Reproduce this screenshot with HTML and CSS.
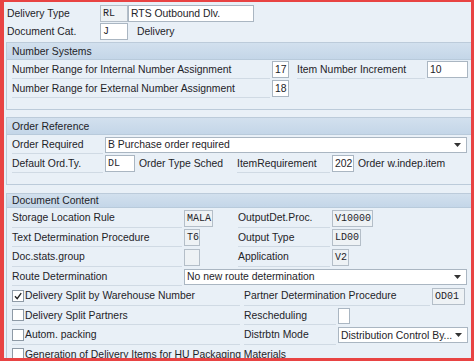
FILE: index.html
```html
<!DOCTYPE html>
<html>
<head>
<meta charset="utf-8">
<link rel="stylesheet" href="styles.css">
</head>
<body>
<div class="frame">
  <div class="top">
    <div class="trow">
      <span class="tl">Delivery Type</span>
      <span class="fld ro mono w28">RL</span>
      <span class="fld w126">RTS Outbound Dlv.</span>
    </div>
    <div class="trow">
      <span class="tl">Document Cat.</span>
      <span class="fld mono w28">J</span>
      <span class="desc ml9">Delivery</span>
    </div>
  </div>

  <section class="grp g1">
    <div class="gh">Number Systems</div>
    <div class="gb">
      <div class="r">
        <span class="lb l258">Number Range for Internal Number Assignment</span>
        <span class="fld w17 ml2">17</span>
        <span class="lb l128 ml8">Item Number Increment</span>
        <span class="fld w41 ml2">10</span>
      </div>
      <div class="r">
        <span class="lb l258">Number Range for External Number Assignment</span>
        <span class="fld w17 ml2">18</span>
      </div>
    </div>
  </section>

  <section class="grp g2">
    <div class="gh">Order Reference</div>
    <div class="gb">
      <div class="r">
        <span class="lb l91">Order Required</span>
        <span class="fld dd w362 ml2"><span class="ddt">B Purchase order required</span><svg class="arr" width="7" height="4" viewBox="0 0 7 4"><path d="M0 0H7L3.5 4Z" fill="#333"/></svg></span>
      </div>
      <div class="r">
        <span class="lb l91">Default Ord.Ty.</span>
        <span class="fld mono w30 ml2">DL</span>
        <span class="desc d98 ml4">Order Type Sched</span>
        <span class="lb l93">ItemRequirement</span>
        <span class="fld w22 ml2">202</span>
        <span class="desc ml4">Order w.indep.item</span>
      </div>
    </div>
  </section>

  <section class="grp g3">
    <div class="gh">Document Content</div>
    <div class="gb">
      <div class="r">
        <span class="lb l170">Storage Location Rule</span>
        <span class="cell ml2"><span class="fld ro mono w29">MALA</span></span>
        <span class="lb l92 ml2">OutputDet.Proc.</span>
        <span class="fld ro mono w41 ml2">V10000</span>
      </div>
      <div class="r">
        <span class="lb l170">Text Determination Procedure</span>
        <span class="cell ml2"><span class="fld ro mono w16">T6</span></span>
        <span class="lb l92 ml2">Output Type</span>
        <span class="fld ro mono w29 ml2">LD00</span>
      </div>
      <div class="r">
        <span class="lb l170">Doc.stats.group</span>
        <span class="cell ml2"><span class="fld ro mono w16"></span></span>
        <span class="lb l92 ml2">Application</span>
        <span class="fld ro mono w17 ml2">V2</span>
      </div>
      <div class="r">
        <span class="lb l170">Route Determination</span>
        <span class="fld dd w283 ml2"><span class="ddt">No new route determination</span><svg class="arr" width="7" height="4" viewBox="0 0 7 4"><path d="M0 0H7L3.5 4Z" fill="#333"/></svg></span>
      </div>
      <div class="r">
        <span class="lb cbl l228"><span class="cb"><svg width="10" height="10" viewBox="0 0 10 10"><path d="M2 5.2L4.2 7.6L8.2 2.2" fill="none" stroke="#222" stroke-width="1.4"/></svg></span>Delivery Split by Warehouse Number</span>
        <span class="lb l186 ml4">Partner Determination Procedure</span>
        <span class="fld ro mono w33 ml2">OD01</span>
      </div>
      <div class="r">
        <span class="lb cbl l228"><span class="cb"></span>Delivery Split Partners</span>
        <span class="lb l92 ml4">Rescheduling</span>
        <span class="fld w12 tall ml2"></span>
      </div>
      <div class="r">
        <span class="lb cbl l228"><span class="cb"></span>Autom. packing</span>
        <span class="lb l92 ml4">Distrbtn Mode</span>
        <span class="fld dd w130 ml2"><span class="ddt">Distribution Control By...</span><svg class="arr" width="7" height="4" viewBox="0 0 7 4"><path d="M0 0H7L3.5 4Z" fill="#333"/></svg></span>
      </div>
      <div class="r">
        <span class="lb cbl l345"><span class="cb"></span>Generation of Delivery Items for HU Packaging Materials</span>
      </div>
    </div>
  </section>
</div>
</body>
</html>
```

FILE: styles.css
```css
html, body {
  margin: 0;
  padding: 0;
}
body {
  font-family: "Liberation Sans", Arial, sans-serif;
  font-size: 10.4px;
  color: #1e2328;
}
.frame {
  width: 474px;
  height: 361px;
  box-sizing: border-box;
  border-style: solid;
  border-color: #e84343;
  border-width: 2px 3px 3px 4px;
  background: #e9f0f7;
  overflow: hidden;
}
.top {
  padding: 2px 0 0 3px;
}
.trow {
  display: flex;
  align-items: center;
  height: 18px;
}
.tl {
  width: 93px;
  flex: none;
}
.desc {
  flex: none;
  white-space: nowrap;
}
.fld {
  flex: none;
  display: flex;
  align-items: center;
  box-sizing: border-box;
  height: 17px;
  border: 1px solid #aab6c2;
  background: #ffffff;
  padding: 0 2px;
  white-space: nowrap;
  overflow: hidden;
}
.fld.ro {
  background: #eef2f5;
  border-color: #b4bec8;
}
.fld.tall {
  height: 16px;
}
.mono {
  font-family: "Liberation Mono", monospace;
  font-size: 10px;
}
.dd {
  height: 16px;
  justify-content: space-between;
  padding-right: 5px;
}
.ddt {
  overflow: hidden;
}
.arr {
  flex: none;
}
.grp {
  border: 1px solid #bccbda;
  border-right: none;
  margin-left: 2px;
}
.g1 { margin-top: 2px; }
.g2 { margin-top: 7px; }
.g3 { margin-top: 8px; }
.gh {
  height: 16px;
  display: flex;
  align-items: center;
  padding-left: 5px;
  background: linear-gradient(#d2e0ee, #c4d6e8);
  border-bottom: 1px solid #b8cadb;
}
.g3 .gh {
  height: 13px;
}
.gb {
  padding: 0 0 11px 5px;
}
.g3 .gb {
  padding-bottom: 0;
}
.r {
  display: flex;
  align-items: center;
  height: 19px;
}
.g3 .r:nth-child(odd) {
  height: 20px;
}
.lb {
  flex: none;
  box-sizing: border-box;
  height: 19px;
  display: flex;
  align-items: center;
  border-bottom: 1px solid #d0dae4;
  white-space: nowrap;
}
.cb {
  flex: none;
  box-sizing: border-box;
  width: 12px;
  height: 12px;
  margin-right: 1px;
  border: 1px solid #8e9aa6;
  background: #fff;
  display: flex;
  align-items: center;
  justify-content: center;
}
.cell {
  flex: none;
  width: 52px;
  display: flex;
}
.l91 { width: 91px; }
.l92 { width: 92px; }
.l93 { width: 93px; }
.l128 { width: 128px; }
.l170 { width: 170px; }
.l186 { width: 186px; }
.l228 { width: 228px; }
.l258 { width: 258px; }
.l345 { width: 345px; }
.d98 { width: 98px; }
.w12 { width: 12px; }
.w16 { width: 16px; }
.w17 { width: 17px; }
.w22 { width: 22px; }
.w28 { width: 28px; }
.w29 { width: 29px; }
.w30 { width: 30px; }
.w33 { width: 33px; }
.w41 { width: 41px; }
.w126 { width: 126px; }
.w130 { width: 130px; }
.w283 { width: 283px; }
.w362 { width: 362px; }
.ml2 { margin-left: 2px; }
.ml4 { margin-left: 4px; }
.ml8 { margin-left: 8px; }
.ml9 { margin-left: 9px; }
```
